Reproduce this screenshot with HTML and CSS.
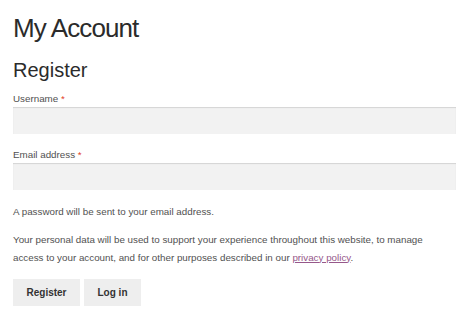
FILE: index.html
```html
<!DOCTYPE html>
<html lang="en">
<head>
    <meta charset="UTF-8">
    <meta name="viewport" content="width=device-width, initial-scale=1.0">
    <title>My Account</title>
    <link rel="stylesheet" href="styles.css">
</head>
<body>
    <main class="account">
        <h1 class="page-title">My Account</h1>
        <h2 class="form-title">Register</h2>

        <form class="register-form">
            <p class="form-row">
                <label for="reg-username">Username <span class="required">*</span></label>
                <input type="text" id="reg-username" class="input-text">
            </p>
            <p class="form-row">
                <label for="reg-email">Email address <span class="required">*</span></label>
                <input type="email" id="reg-email" class="input-text">
            </p>

            <p class="note">A password will be sent to your email address.</p>

            <p class="privacy">Your personal data will be used to support your experience throughout this website, to manage access to your account, and for other purposes described in our <a href="#" class="privacy-link">privacy policy</a>.</p>

            <div class="actions">
                <button type="submit" class="button">Register</button>
                <button type="button" class="button">Log in</button>
            </div>
        </form>
    </main>
</body>
</html>
```

FILE: styles.css
```css
* {
    margin: 0;
    padding: 0;
    box-sizing: border-box;
}

body {
    font-family: 'Liberation Sans', Arial, sans-serif;
    background: #fff;
    color: #515151;
}

.account {
    padding: 12px 18px 0 13px;
}

.page-title {
    font-size: 26px;
    font-weight: 400;
    letter-spacing: -0.9px;
    line-height: 32px;
    color: #2b2b2b;
}

.form-title {
    font-size: 20px;
    font-weight: 400;
    line-height: 24px;
    margin-top: 14px;
    color: #2b2b2b;
}

.form-row {
    margin-top: 11px;
}

.form-row + .form-row {
    margin-top: 15px;
}

.form-row label {
    display: block;
    font-size: 9.8px;
    line-height: 12px;
    margin-bottom: 2px;
    color: #515151;
}

.required {
    color: #e2401c;
}

.input-text {
    display: block;
    width: 100%;
    height: 27px;
    border: none;
    background-color: #f2f2f2;
    box-shadow: inset 0 1px 1px rgba(0, 0, 0, 0.125);
    font-family: inherit;
    outline: none;
}

.note,
.privacy {
    font-size: 9.8px;
    line-height: 17.5px;
}

.note {
    margin-top: 13px;
}

.privacy {
    max-width: 425px;
    margin-top: 10px;
    line-height: 18px;
}

.privacy-link {
    color: #96588a;
}

.actions {
    display: flex;
    gap: 4px;
    margin-top: 12px;
}

.button {
    height: 27px;
    padding: 0 13.5px;
    border: none;
    background-color: #eeeeee;
    color: #333;
    font-family: inherit;
    font-size: 10px;
    font-weight: 700;
    cursor: pointer;
}
```
